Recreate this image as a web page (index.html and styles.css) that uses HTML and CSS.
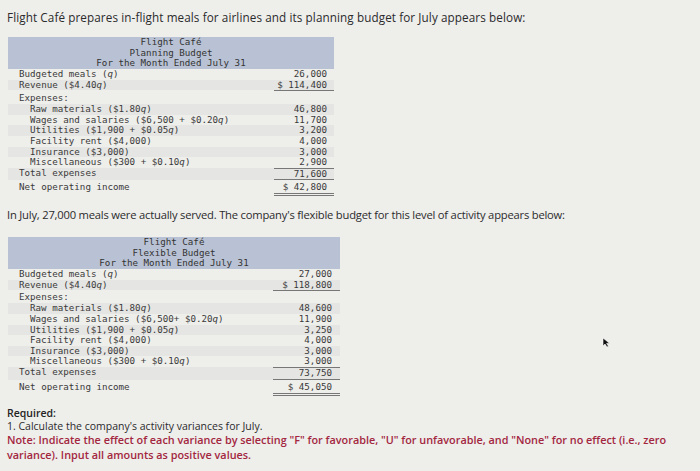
FILE: index.html
```html
<!DOCTYPE html>
<html>
<head>
<meta charset="utf-8">
<link rel="stylesheet" href="styles.css">
</head>
<body>
<div class="page">
  <p class="intro first">Flight Café prepares in-flight meals for airlines and its planning budget for July appears below:</p>

  <div class="sheet s1">
    <div class="head">
      <div>Flight Café</div>
      <div>Planning Budget</div>
      <div>For the Month Ended July 31</div>
    </div>
    <div class="row"><span class="lbl">Budgeted meals (<i>q</i>)</span><span class="val">26,000</span></div>
    <div class="row alt"><span class="lbl">Revenue ($4.40<i>q</i>)</span><span class="val ul">$ 114,400</span></div>
    <div class="row exp"><span class="lbl">Expenses:</span><span class="val"></span></div>
    <div class="row alt"><span class="lbl ind">Raw materials ($1.80<i>q</i>)</span><span class="val">46,800</span></div>
    <div class="row"><span class="lbl ind">Wages and salaries ($6,500 + $0.20<i>q</i>)</span><span class="val">11,700</span></div>
    <div class="row alt"><span class="lbl ind">Utilities ($1,900 + $0.05<i>q</i>)</span><span class="val">3,200</span></div>
    <div class="row"><span class="lbl ind">Facility rent ($4,000)</span><span class="val">4,000</span></div>
    <div class="row alt"><span class="lbl ind">Insurance ($3,000)</span><span class="val">3,000</span></div>
    <div class="row"><span class="lbl ind">Miscellaneous ($300 + $0.10<i>q</i>)</span><span class="val">2,900</span></div>
    <div class="row total alt"><span class="lbl">Total expenses</span><span class="val">71,600</span></div>
    <div class="row net"><span class="lbl">Net operating income</span><span class="val">$ 42,800</span></div>
  </div>

  <p class="intro second">In July, 27,000 meals were actually served. The company's flexible budget for this level of activity appears below:</p>

  <div class="sheet s2">
    <div class="head">
      <div>Flight Café</div>
      <div>Flexible Budget</div>
      <div>For the Month Ended July 31</div>
    </div>
    <div class="row"><span class="lbl">Budgeted meals (<i>q</i>)</span><span class="val">27,000</span></div>
    <div class="row alt"><span class="lbl">Revenue ($4.40<i>q</i>)</span><span class="val ul">$ 118,800</span></div>
    <div class="row exp"><span class="lbl">Expenses:</span><span class="val"></span></div>
    <div class="row alt"><span class="lbl ind">Raw materials ($1.80<i>q</i>)</span><span class="val">48,600</span></div>
    <div class="row"><span class="lbl ind">Wages and salaries ($6,500+ $0.20<i>q</i>)</span><span class="val">11,900</span></div>
    <div class="row alt"><span class="lbl ind">Utilities ($1,900 + $0.05<i>q</i>)</span><span class="val">3,250</span></div>
    <div class="row"><span class="lbl ind">Facility rent ($4,000)</span><span class="val">4,000</span></div>
    <div class="row alt"><span class="lbl ind">Insurance ($3,000)</span><span class="val">3,000</span></div>
    <div class="row"><span class="lbl ind">Miscellaneous ($300 + $0.10<i>q</i>)</span><span class="val">3,000</span></div>
    <div class="row total alt"><span class="lbl">Total expenses</span><span class="val">73,750</span></div>
    <div class="row net"><span class="lbl">Net operating income</span><span class="val">$ 45,050</span></div>
  </div>

  <div class="required">
    <div class="req-title">Required:</div>
    <div class="req-item">1. Calculate the company's activity variances for July.</div>
    <div class="note">Note: Indicate the effect of each variance by selecting "F" for favorable, "U" for unfavorable, and "None" for no effect (i.e., zero<br>variance). Input all amounts as positive values.</div>
  </div>

  <svg class="cursor" width="9" height="11" viewBox="0 0 9 11"><path d="M1 1 L1 9 L3 7 L5 10 L6.5 9.3 L4.6 6.4 L7.5 6.2 Z" fill="#111" stroke="#fff" stroke-width="0.6"/></svg>
</div>
</body>
</html>
```
FILE: styles.css
```css
html, body {
  margin: 0;
  padding: 0;
  background: #eeeeeb;
}
.page {
  position: relative;
  width: 700px;
  height: 471px;
  padding: 10px 0 0 7px;
  box-sizing: border-box;
  font-family: "Open Sans", "Liberation Sans", sans-serif;
  color: #2b2b2b;
}
.intro {
  margin: 0;
  font-size: 11.7px;
  line-height: 14px;
  white-space: nowrap;
}
.first {
  letter-spacing: 0.1px;
}
.second {
  margin-top: 12px;
  font-size: 11.2px;
  letter-spacing: -0.2px;
}
.sheet {
  margin-left: 1px;
  margin-top: 13px;
  font-family: "DejaVu Sans Mono", "Liberation Mono", monospace;
  font-size: 9.2px;
  color: #3a3a3a;
}
.s1 { width: 326px; }
.s2 { width: 332px; margin-top: 15px; }
.sheet i { font-style: italic; }
.head {
  background: #b9c2d4;
  height: 32px;
  text-align: center;
  line-height: 10.5px;
  color: #333;
}
.row {
  display: grid;
  grid-template-columns: 1fr 60px;
  height: 10.6px;
  line-height: 10.6px;
}
.s2 .row { grid-template-columns: 1fr 67px; }
.row.alt { background: #e5e5e3; }
.row.exp {
  height: 14px;
  line-height: 15px;
}
.s2 .row.exp {
  height: 13px;
  line-height: 14px;
}
.lbl {
  padding-left: 11px;
  white-space: nowrap;
}
.lbl.ind { padding-left: 22px; }
.val {
  text-align: right;
  padding-right: 7px;
  white-space: pre;
}
.s2 .val { padding-right: 8px; }
.val.ul {
  border-bottom: 1px solid #777;
}
.row.total {
  height: 12.5px;
  line-height: 10.5px;
}
.row.total .val {
  border-top: 1px solid #777;
  border-bottom: 1px solid #777;
}
.row.net {
  height: 16px;
  line-height: 14px;
}
.row.net .val {
  border-bottom: 3px double #777;
  height: 13px;
}
.required {
  margin-top: 11px;
  font-size: 10.5px;
  line-height: 13.3px;
}
.req-title {
  font-weight: 600;
  color: #222;
}
.req-item {
  color: #2b2b2b;
}
.note {
  color: #a3273f;
  font-weight: 600;
  font-size: 10.85px;
  line-height: 14.8px;
  white-space: nowrap;
}
.cursor {
  position: absolute;
  left: 602px;
  top: 337px;
}
```
